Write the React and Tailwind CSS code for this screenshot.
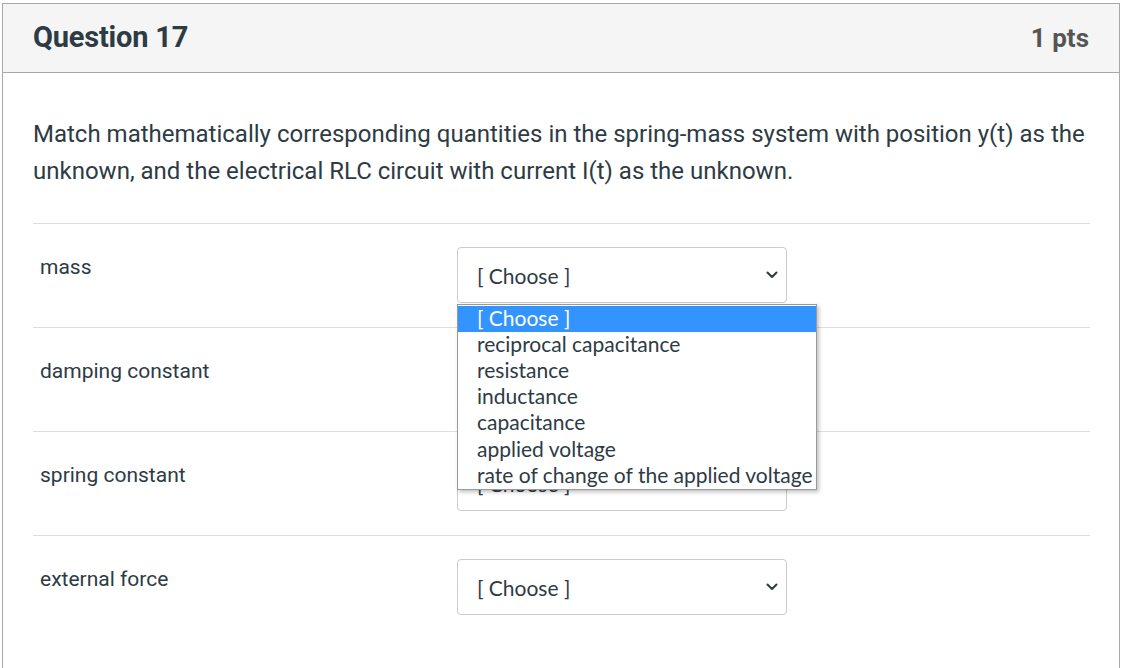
import React from "react";

const rows = ["mass", "damping constant", "spring constant", "external force"];
const options = [
  "[ Choose ]",
  "reciprocal capacitance",
  "resistance",
  "inductance",
  "capacitance",
  "applied voltage",
  "rate of change of the applied voltage",
];

function Chevron() {
  return (
    <svg width="12" height="8" viewBox="0 0 12 8" className="shrink-0">
      <path d="M1.5 1.5 L6 6 L10.5 1.5" fill="none" stroke="#2d3b45" strokeWidth="2" strokeLinecap="round" strokeLinejoin="round" />
    </svg>
  );
}

function Select({ open }) {
  return (
    <div className="relative w-[330px]">
      <div className="h-[56px] rounded-[4px] border border-[#c7cdd1] bg-white flex items-center pl-[19px] pr-[8px] justify-between">
        <span className="text-[21px] text-[#2d3b45] pt-[1px]" style={{ fontFamily: "Lato, sans-serif" }}>[ Choose ]</span>
        <Chevron />
      </div>
      {open && (
        <div className="absolute left-0 top-[57px] w-[360px] z-10 bg-white border border-[#9a9a9a] shadow-[2px_2px_4px_rgba(0,0,0,0.25)] pt-[1px]">
          {options.map((o, i) => (
            <div
              key={o}
              className={
                "h-[26.2px] flex items-center pl-[19px] pb-[4px] text-[21px] leading-none whitespace-nowrap " +
                (i === 0 ? "bg-[#3393ff] text-white" : "text-[#2d3b45]")
              }
              style={{ fontFamily: "Lato, sans-serif" }}
            >
              {o}
            </div>
          ))}
        </div>
      )}
    </div>
  );
}

export default function App() {
  return (
    <div className="w-[1121px] h-[668px] bg-white overflow-hidden pt-[3px] pl-[2px]" style={{ fontFamily: "Roboto, 'Liberation Sans', sans-serif" }}>
      <div className="w-[1118px] h-[700px] border border-[#a8a8a8]">
        <div className="h-[69px] bg-[#f5f5f5] border-b border-[#a8a8a8] flex items-center justify-between pl-[30px] pr-[30px]">
          <h2 className="text-[29px] font-bold text-[#2d3b45] tracking-[-0.2px]">Question 17</h2>
          <span className="text-[26px] font-bold text-[#555555]">1 pts</span>
        </div>
        <div className="pl-[30px] pr-[29px]">
          <p className="mt-[43px] text-[24px] leading-[37px] text-[#2d3b45]">
            Match mathematically corresponding quantities in the spring-mass system with position y(t) as the unknown, and the electrical RLC circuit with current I(t) as the unknown.
          </p>
          <div className="mt-[33px]">
            {rows.map((r, i) => (
              <div key={r} className="h-[104px] border-t border-[#dcdee0] flex">
                <div className="w-[424px] pl-[7px] pt-[30px] text-[21px] leading-[27px] text-[#2d3b45]">{r}</div>
                <div className="pt-[23px]">
                  <Select open={i === 0} />
                </div>
              </div>
            ))}
          </div>
        </div>
      </div>
    </div>
  );
}
